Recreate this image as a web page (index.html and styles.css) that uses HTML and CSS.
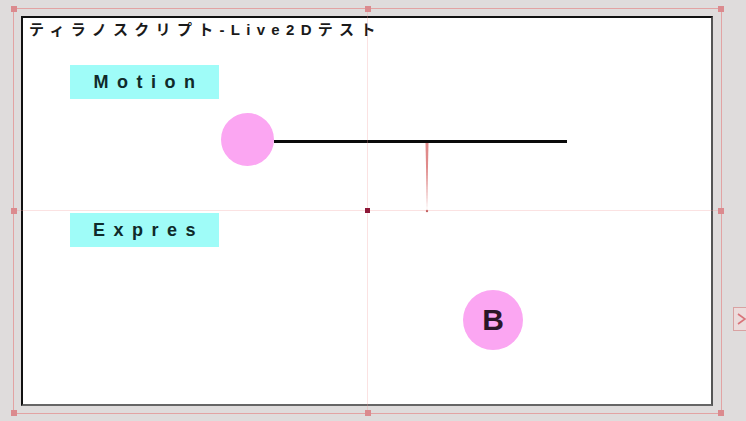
FILE: index.html
```html
<!DOCTYPE html>
<html lang="ja">
<head>
<meta charset="utf-8">
<title>ティラノスクリプト-Live2Dテスト</title>
<link rel="stylesheet" href="styles.css">
</head>
<body>
<div class="editor">
  <div class="stage">
    <div class="title">ティラノスクリプト-Live2Dテスト</div>
    <div class="btn btn-motion">Motion</div>
    <div class="btn btn-expres">Expres</div>
    <div class="ball"></div>
    <div class="bar"></div>
    <svg class="needle" width="4" height="70" viewBox="0 0 4 70"><polygon points="0.5,0 3.5,0 2,68" fill="#e08a8a"/><circle cx="2" cy="68" r="1.2" fill="#c06060"/></svg>
    <div class="bcircle">B</div>
  </div>
  <div class="vguide"></div>
  <div class="hguide"></div>
  <div class="frame">
    <span class="h h-tl"></span><span class="h h-tc"></span><span class="h h-tr"></span>
    <span class="h h-ml"></span><span class="h h-mr"></span>
    <span class="h h-bl"></span><span class="h h-bc"></span><span class="h h-br"></span>
  </div>
  <div class="center-dot"></div>
  <div class="side-tab"><svg width="14" height="16" viewBox="0 0 14 16"><path d="M3 3 L10 8 L3 13" fill="none" stroke="#d9747a" stroke-width="1.6"/></svg></div>
</div>
</body>
</html>
```
FILE: styles.css
```css
html, body {
  margin: 0;
  padding: 0;
  background: #dfdcdc;
  overflow: hidden;
}
.editor {
  position: relative;
  width: 746px;
  height: 421px;
  overflow: hidden;
  font-family: "Liberation Sans", "Noto Sans CJK JP", sans-serif;
}
.stage {
  position: absolute;
  left: 21px;
  top: 16px;
  width: 688px;
  height: 386px;
  background: #ffffff;
  border-top: 2px solid #111;
  border-left: 2px solid #111;
  border-right: 2px solid #555;
  border-bottom: 2px solid #666;
}
.title {
  position: absolute;
  left: 6px;
  top: 3px;
  font-size: 15px;
  font-weight: bold;
  letter-spacing: 6.3px;
  color: #1a1a1a;
  line-height: 18px;
  white-space: nowrap;
}
.btn {
  position: absolute;
  left: 47px;
  width: 149px;
  height: 34px;
  background: #9ffcf8;
  color: #0f2a2a;
  font-size: 18px;
  font-weight: bold;
  letter-spacing: 8.5px;
  text-indent: 8px;
  display: flex;
  align-items: center;
  justify-content: center;
}
.btn-motion { top: 47px; }
.btn-expres { top: 195px; }
.ball {
  position: absolute;
  left: 198px;
  top: 95px;
  width: 53px;
  height: 53px;
  border-radius: 50%;
  background: #fba6f2;
}
.bar {
  position: absolute;
  left: 251px;
  top: 122px;
  width: 293px;
  height: 3px;
  background: #0a0a0a;
}
.needle {
  position: absolute;
  left: 402px;
  top: 125px;
}
.bcircle {
  position: absolute;
  left: 440px;
  top: 272px;
  width: 60px;
  height: 60px;
  border-radius: 50%;
  background: #fba6f2;
  color: #2a1628;
  font-size: 30px;
  font-weight: bold;
  display: flex;
  align-items: center;
  justify-content: center;
}
.vguide {
  position: absolute;
  left: 367px;
  top: 8px;
  width: 1px;
  height: 405px;
  background: rgba(240, 150, 150, 0.28);
}
.hguide {
  position: absolute;
  left: 13px;
  top: 210px;
  width: 709px;
  height: 1px;
  background: rgba(240, 150, 150, 0.28);
}
.frame {
  position: absolute;
  left: 13px;
  top: 8px;
  width: 709px;
  height: 406px;
  border: 1px solid #e2a3a3;
  box-sizing: border-box;
}
.h {
  position: absolute;
  width: 6px;
  height: 6px;
  background: #db8a8e;
}
.h-tl { left: -3px; top: -3px; }
.h-tc { left: 351px; top: -3px; }
.h-tr { right: -3px; top: -3px; }
.h-ml { left: -3px; top: 199px; }
.h-mr { right: -3px; top: 199px; }
.h-bl { left: -3px; bottom: -3px; }
.h-bc { left: 351px; bottom: -3px; }
.h-br { right: -3px; bottom: -3px; }
.center-dot {
  position: absolute;
  left: 365px;
  top: 208px;
  width: 5px;
  height: 5px;
  background: #8e1838;
}
.side-tab {
  position: absolute;
  left: 733px;
  top: 307px;
  width: 20px;
  height: 24px;
  box-sizing: border-box;
  border: 1px solid #d9a2a2;
  background: #ecdcdc;
  display: flex;
  align-items: center;
  padding-left: 1px;
}
```
